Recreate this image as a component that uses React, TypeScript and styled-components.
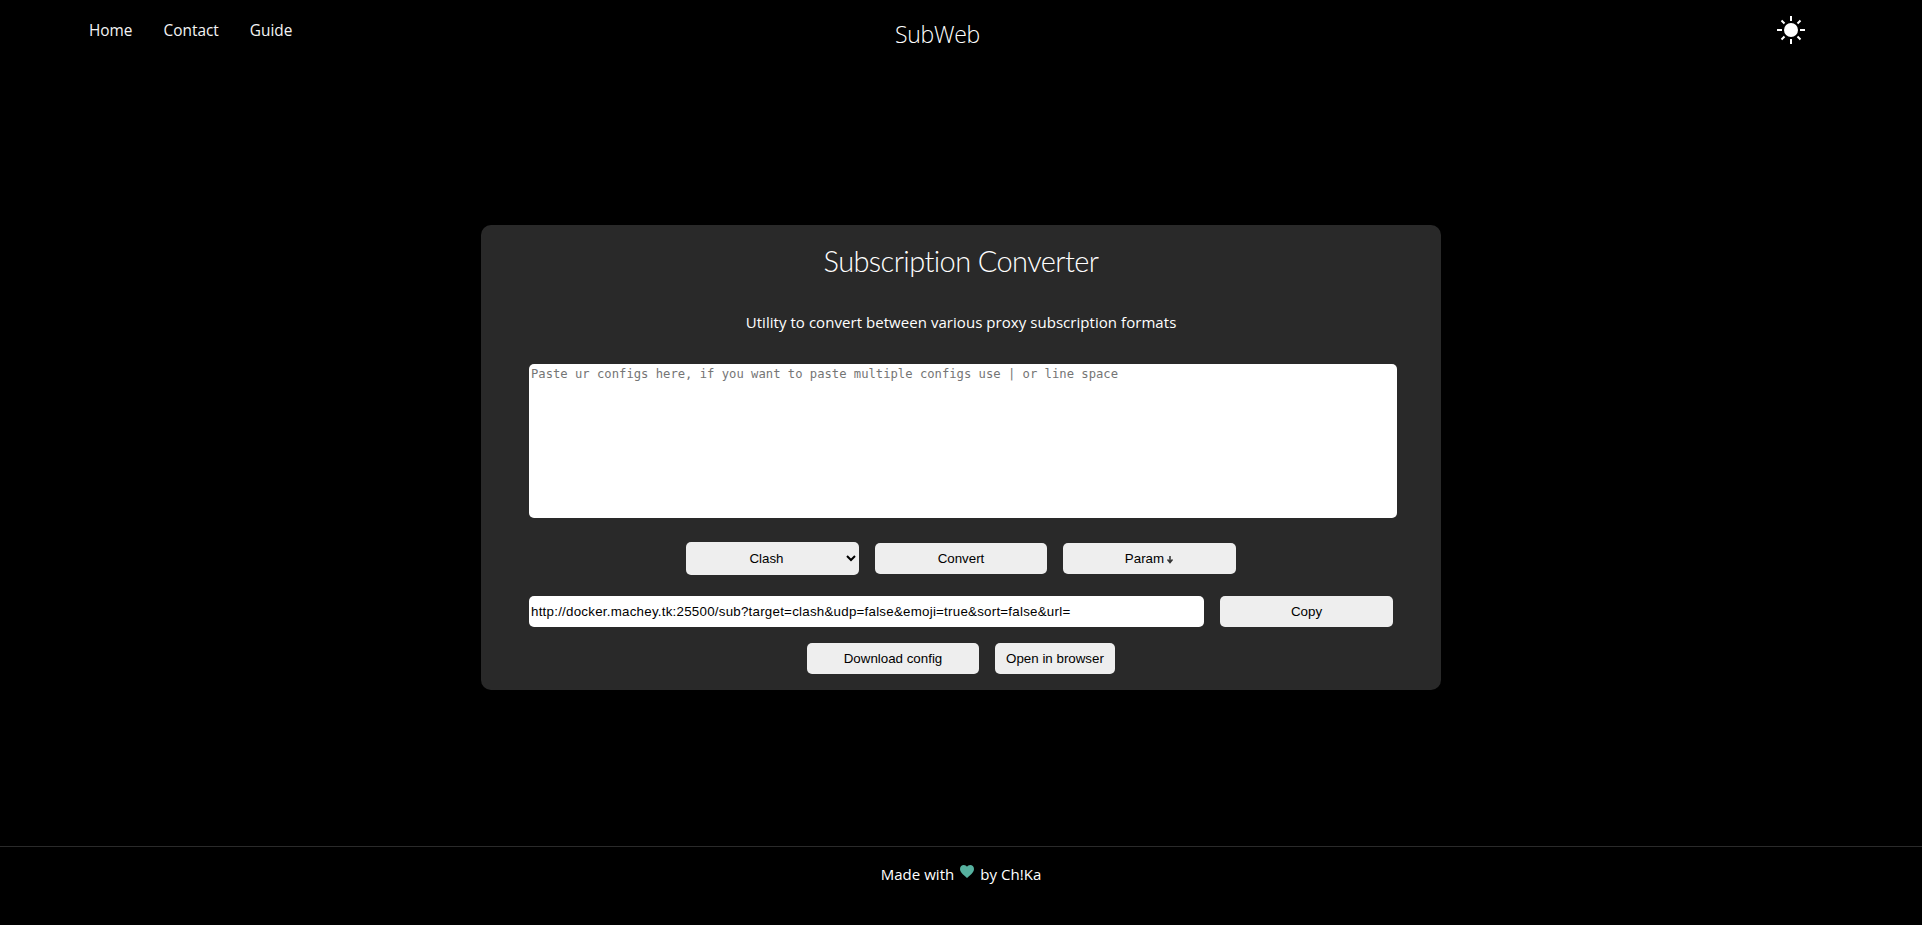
import React from 'react';
import styled, { createGlobalStyle } from 'styled-components';

const GlobalStyle = createGlobalStyle`
	html, body {
		margin: 0;
		padding: 0;
		background: #000;
	}
	body {
		font-family: 'Open Sans', 'Noto Sans', sans-serif;
		color: #fff;
	}
`;

const Page = styled.div`
	display: flex;
	flex-direction: column;
	height: 925px;
	overflow: hidden;
`;

const Header = styled.header`
	display: flex;
	align-items: center;
	height: 60px;
	margin-bottom: 9px;
	padding: 0 117px 0 89px;
`;

const Nav = styled.nav`
	display: flex;
	gap: 31px;
	width: 806px;
`;

const NavLink = styled.a`
	font-size: 15.4px;
	color: #f4f4f4;
	text-decoration: none;
`;

const Brand = styled.div`
	margin-top: 7px;
	font-size: 23px;
	font-weight: 300;
	letter-spacing: -0.3px;
	color: #fff;
`;

const ThemeToggle = styled.button`
	display: flex;
	margin-left: auto;
	padding: 0;
	border: 0;
	background: none;
`;

const Main = styled.main`
	flex: 1;
	display: flex;
	align-items: center;
	justify-content: center;
`;

const Card = styled.section`
	box-sizing: border-box;
	display: flex;
	flex-direction: column;
	align-items: center;
	width: 960px;
	height: 465px;
	padding: 16px 48px;
	border-radius: 10px;
	background: #292929;
`;

const Title = styled.h1`
	margin: -1px 0 1px;
	font-family: Lato, 'Open Sans', sans-serif;
	font-size: 29px;
	line-height: 42px;
	font-weight: 300;
	letter-spacing: -0.6px;
`;

const Subtitle = styled.p`
	margin: 29px 0 0;
	font-size: 15px;
	line-height: 20px;
	letter-spacing: 0.05px;
`;

const ConfigInput = styled.textarea`
	box-sizing: border-box;
	display: block;
	align-self: flex-start;
	flex-shrink: 0;
	width: 868px;
	height: 154px;
	margin-top: 32px;
	padding: 3px 2px;
	border: 0;
	border-radius: 5px;
	outline: none;
	resize: none;
	background: #fff;
	font-family: 'DejaVu Sans Mono', monospace;
	font-size: 12.2px;

	&::placeholder {
		color: #757575;
	}
`;

const Row = styled.div<{ $top: number }>`
	display: flex;
	justify-content: center;
	align-items: center;
	gap: 16px;
	margin-top: ${(p) => p.$top}px;
`;

const Button = styled.button<{ $width: number }>`
	box-sizing: border-box;
	width: ${(p) => p.$width}px;
	height: 31px;
	padding: 0;
	border: 0;
	border-radius: 5px;
	background: #eee;
	color: #000;
	font-family: 'Liberation Sans', Arial, sans-serif;
	font-size: 13.333px;
`;

const TargetSelect = styled.select`
	box-sizing: border-box;
	width: 173px;
	height: 33px;
	padding: 0;
	border: 0;
	border-radius: 5px;
	background-color: #eee;
	color: #000;
	text-align: center;
	font-family: 'Liberation Sans', Arial, sans-serif;
	font-size: 13.333px;
`;

const UrlInput = styled.input`
	box-sizing: border-box;
	width: 675px;
	height: 31px;
	padding: 1px 2px;
	border: 0;
	border-radius: 5px;
	outline: none;
	background: #fff;
	color: #000;
	font-family: 'Liberation Sans', Arial, sans-serif;
	font-size: 13.333px;
	letter-spacing: 0.24px;
`;

const Footer = styled.footer`
	display: flex;
	justify-content: center;
	align-items: center;
	gap: 6px;
	height: 54px;
	padding-bottom: 24px;
	border-top: 1px solid #2a2a2a;
	font-size: 15px;
	letter-spacing: 0.03px;
`;

const SmallArrow = styled.svg`
	margin-left: 2px;
	vertical-align: -1px;
`;

const Heart = styled.svg`
	margin-top: -5px;
`;

const SunIcon: React.FC = () => (
	<svg width='28' height='28' viewBox='0 0 28 28' fill='none' stroke='#fff' strokeWidth='2'>
		<circle cx='14' cy='14' r='7' fill='#fff' stroke='none' />
		<path d='M14 0v5M14 23v5M0 14h5M23 14h5M4.5 4.5l3 3M20.500 20.500l3 3M23.500 4.500l-3 3M7.500 20.500l-3 3' />
	</svg>
);

const App: React.FC = () => {
	return (
		<Page>
			<GlobalStyle />
			<Header>
				<Nav>
					<NavLink href='#'>Home</NavLink>
					<NavLink href='#'>Contact</NavLink>
					<NavLink href='#'>Guide</NavLink>
				</Nav>
				<Brand>SubWeb</Brand>
				<ThemeToggle aria-label='Toggle theme'>
					<SunIcon />
				</ThemeToggle>
			</Header>
			<Main>
				<Card>
					<Title>Subscription Converter</Title>
					<Subtitle>Utility to convert between various proxy subscription formats</Subtitle>
					<ConfigInput placeholder='Paste ur configs here, if you want to paste multiple configs use | or line space' />
					<Row $top={24}>
						<TargetSelect defaultValue='clash'>
							<option value='clash'>Clash</option>
							<option value='v2ray'>V2Ray</option>
						</TargetSelect>
						<Button $width={172}>Convert</Button>
						<Button $width={173}>
							Param
							<SmallArrow width='8' height='9' viewBox='0 0 8 9' fill='none' stroke='#333' strokeWidth='1.500'>
								<path d='M4 1v6M1.500 4.500L4 7.500l2.500-3' />
							</SmallArrow>
						</Button>
					</Row>
					<Row $top={21}>
						<UrlInput readOnly value='http://docker.machey.tk:25500/sub?target=clash&udp=false&emoji=true&sort=false&url=' />
						<Button $width={173}>Copy</Button>
					</Row>
					<Row $top={16}>
						<Button $width={172}>Download config</Button>
						<Button $width={120}>Open in browser</Button>
					</Row>
				</Card>
			</Main>
			<Footer>
				<span>Made with</span>
				<Heart width='14' height='13' viewBox='0 0 14 13' fill='#56b19f'>
					<path d='M7 13C5 11 0 8 0 4C0 1.500 1.800 0 3.800 0C5.200 0 6.300 .7 7 1.800C7.700 .7 8.800 0 10.200 0C12.200 0 14 1.500 14 4C14 8 9 11 7 13Z' />
				</Heart>
				<span>by Ch!Ka</span>
			</Footer>
		</Page>
	);
};

export default App;
